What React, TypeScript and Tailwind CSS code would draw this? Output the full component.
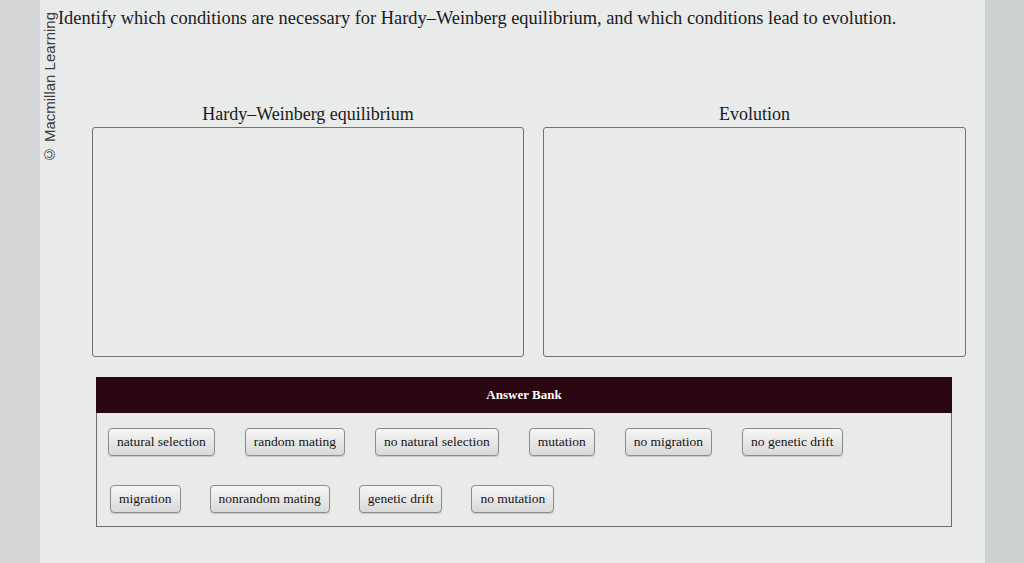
const hwLeft = ['natural selection', 'random mating', 'no natural selection', 'mutation', 'no migration', 'no genetic drift'];
const hwRow2 = ['migration', 'nonrandom mating', 'genetic drift', 'no mutation'];

function Chip({ label }: { label: string }) {
  return (
    <div className="h-[28px] px-[8px] flex items-center rounded-[4px] border border-[#8c8c8c] bg-gradient-to-b from-[#f6f6f6] to-[#d9d9d9] shadow-[0_1px_1px_rgba(0,0,0,0.15)] text-[13.5px] text-[#141414] whitespace-nowrap">
      {label}
    </div>
  );
}

export default function App() {
  return (
    <div className="w-[1024px] h-[563px] flex overflow-hidden font-['Liberation_Serif',serif]">
      {/* left bezel */}
      <div className="w-[40px] bg-[#d4d5d6]" />

      {/* page */}
      <div className="w-[945px] bg-[#e9eaea] flex">
        {/* copyright strip */}
        <div className="w-[18px] pt-[12px] flex justify-center items-start">
          <div className="[writing-mode:vertical-rl] rotate-180 font-['Liberation_Sans',sans-serif] text-[15px] leading-[17px] text-[#3a3a3a] whitespace-nowrap">
            © Macmillan Learning
          </div>
        </div>

        <div className="flex-1">
          <h1 className="pt-[7px] text-[18.4px] leading-[22px] text-[#1a1a1a]">
            Identify which conditions are necessary for Hardy–Weinberg equilibrium, and which conditions lead to evolution.
          </h1>

          {/* drop targets */}
          <div className="mt-[74px] ml-[34px] flex gap-[19px]">
            <div className="w-[432px]">
              <p className="text-center text-[18px] leading-[22px] text-[#1a1a1a]">Hardy–Weinberg equilibrium</p>
              <div className="mt-[2px] h-[230px] border-[1.5px] border-[#727272] rounded-[3px]" />
            </div>
            <div className="w-[423px]">
              <p className="text-center text-[18px] leading-[22px] text-[#1a1a1a]">Evolution</p>
              <div className="mt-[2px] h-[230px] border-[1.5px] border-[#727272] rounded-[3px]" />
            </div>
          </div>

          {/* answer bank */}
          <div className="mt-[20px] ml-[38px] w-[856px]">
            <div className="h-[36px] bg-[#2a0711] flex items-center justify-center text-white font-bold text-[13px]">
              Answer Bank
            </div>
            <div className="h-[114px] border border-t-0 border-[#6e6e6e] px-[11px] pt-[15px] flex flex-col gap-[29px]">
              <div className="flex gap-[30px]">
                {hwLeft.map((l) => (
                  <Chip key={l} label={l} />
                ))}
              </div>
              <div className="flex gap-[29px] pl-[2px]">
                {hwRow2.map((l) => (
                  <Chip key={l} label={l} />
                ))}
              </div>
            </div>
          </div>
        </div>
      </div>

      {/* right bezel */}
      <div className="flex-1 bg-[#ced1d2]" />
    </div>
  );
}
